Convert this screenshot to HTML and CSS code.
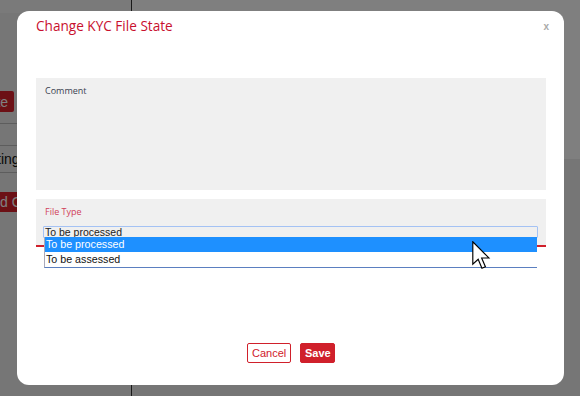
FILE: index.html
```html
<!DOCTYPE html>
<html lang="en">
<head>
  <meta charset="UTF-8" />
  <meta name="viewport" content="width=device-width, initial-scale=1" />
  <title>Change KYC File State</title>
  <link rel="stylesheet" href="styles.css">
</head>
<body>

  <!-- Page behind the modal -->
  <div class="page">
    <div class="side">
      <div class="topstrip"></div>
      <button class="btn-bg btn-update">Update</button>
      <div class="row-line"></div>
      <div class="row-line second"></div>
      <div class="row-text">Setting</div>
      <div class="row-line third"></div>
      <button class="btn-bg btn-order">Add Order</button>
    </div>
    <div class="main">
      <div class="main-top"></div>
    </div>
  </div>

  <!-- Overlay -->
  <div class="overlay"></div>

  <!-- Modal -->
  <div class="modal">
    <div class="modal-header">
      <h2 class="modal-title">Change KYC File State</h2>
      <span class="close">x</span>
    </div>

    <div class="field comment">
      <label>Comment</label>
    </div>

    <div class="field filetype">
      <label>File Type</label>
      <div class="select-wrap">
        <div class="select">To be processed</div>
        <ul class="options">
          <li class="selected">To be processed</li>
          <li>To be assessed</li>
        </ul>
        <svg class="cursor" width="19" height="29" viewBox="0 0 13 20">
          <path d="M0.5 0.5 L0.5 16 L4.2 12.6 L6.8 18.8 L9.2 17.8 L6.6 11.7 L11.6 11.7 Z" fill="#fff" stroke="#000" stroke-width="0.8" stroke-linejoin="miter"/>
        </svg>
      </div>
    </div>

    <div class="modal-footer">
      <button class="btn btn-cancel">Cancel</button>
      <button class="btn btn-save">Save</button>
    </div>
  </div>

</body>
</html>
```

FILE: styles.css
```css
body {
  margin: 0;
  padding: 0;
  overflow: hidden;
  height: 100vh;
  background: #fff;
  font-family: 'Liberation Sans', Arial, sans-serif;
}

/* Pagina de fondo */
.page {
  display: grid;
  grid-template-columns: 132px 1fr;
  height: 100vh;
}

.side {
  background: #ececec;
  border-right: 1px solid #333;
  display: flex;
  flex-direction: column;
}

.topstrip {
  height: 13px;
  background: #f4f4f4;
  margin-bottom: 78px;
}

.btn-bg {
  align-self: flex-start;
  height: 21px;
  padding: 0 6px;
  border: none;
  border-radius: 2px;
  background: #d8202a;
  color: #fff;
  font-family: 'Liberation Sans', Arial, sans-serif;
  font-size: 14px;
  white-space: nowrap;
}

.btn-update { margin-left: -43px; }

.row-line {
  height: 1px;
  background: #bbb;
  margin-top: 11px;
}

.row-line.second { margin-top: 21px; }
.row-line.third { margin-top: 0; }

.row-text {
  margin-left: -24px;
  margin-top: 5px;
  font-size: 14px;
  color: #111;
  height: 21px;
  white-space: nowrap;
}

.btn-order {
  margin-top: 19px;
  margin-left: -23px;
  height: 20px;
}

.main {
  background: #ececec;
}

.main-top {
  height: 159px;
  background: #fff;
}

/* Capa oscura */
.overlay {
  position: fixed;
  inset: 0;
  background: rgba(0, 0, 0, 0.5);
}

/* Modal */
.modal {
  position: fixed;
  left: 17px;
  top: 11px;
  width: 547px;
  height: 374px;
  box-sizing: border-box;
  background: #fff;
  border-radius: 12px;
  padding: 0 18px 0 19px;
  display: flex;
  flex-direction: column;
}

.modal-header {
  display: flex;
  justify-content: space-between;
  align-items: flex-start;
  height: 67px;
}

.modal-title {
  margin: 5px 0 0;
  font-family: 'Open Sans', sans-serif;
  font-weight: 400;
  font-size: 13.6px;
  line-height: 20px;
  color: #c8102e;
}

.close {
  margin: 10px -3px 0 0;
  font-size: 10px;
  font-weight: bold;
  color: #aaa;
}

.field {
  background: #f0f0f0;
  padding: 7px 9px 0;
  box-sizing: border-box;
}

.field label {
  display: block;
  font-family: 'Open Sans', sans-serif;
  font-size: 9px;
  line-height: 12px;
}

.comment {
  height: 112px;
  margin-bottom: 9px;
}

.comment label { color: #3a4250; }

.filetype {
  height: 48px;
  border-bottom: 2px solid #d0202b;
}

.filetype label { color: #d0405a; }

.select-wrap {
  position: relative;
  margin: 8px 0 0 -2px;
  width: 495px;
}

.select {
  height: 10px;
  border: 1px solid #a4c2f4;
  border-radius: 1px;
  font-size: 10.5px;
  line-height: 10px;
  color: #222;
  padding-left: 1px;
}

/* Lista desplegada sobre el contenido */
.options {
  position: absolute;
  left: 1px;
  top: 11px;
  width: 492px;
  margin: 0;
  padding: 0;
  list-style: none;
  background: #fff;
  border-left: 1px solid #aab;
  border-bottom: 1px solid #5b7fc0;
  font-size: 10.7px;
  z-index: 2;
}

.options li {
  height: 15px;
  line-height: 14px;
  padding-left: 1px;
  color: #111;
}

.options li + li {
  height: 15px;
}

.options li.selected {
  background: #1e90ff;
  color: #fff;
}

.cursor {
  position: absolute;
  left: 429px;
  top: 15px;
  z-index: 3;
}

.modal-footer {
  margin-top: auto;
  margin-bottom: 22px;
  display: flex;
  justify-content: center;
  gap: 9px;
}

.btn {
  height: 20px;
  border-radius: 2px;
  font-family: 'Liberation Sans', Arial, sans-serif;
  font-size: 11px;
  padding: 0 4px;
  cursor: pointer;
}

.btn-cancel {
  background: #fff;
  border: 1px solid #d0202b;
  color: #d0202b;
  width: 44px;
}

.btn-save {
  background: #d0202b;
  border: 1px solid #d0202b;
  color: #fff;
  font-weight: bold;
  width: 35px;
}
```
